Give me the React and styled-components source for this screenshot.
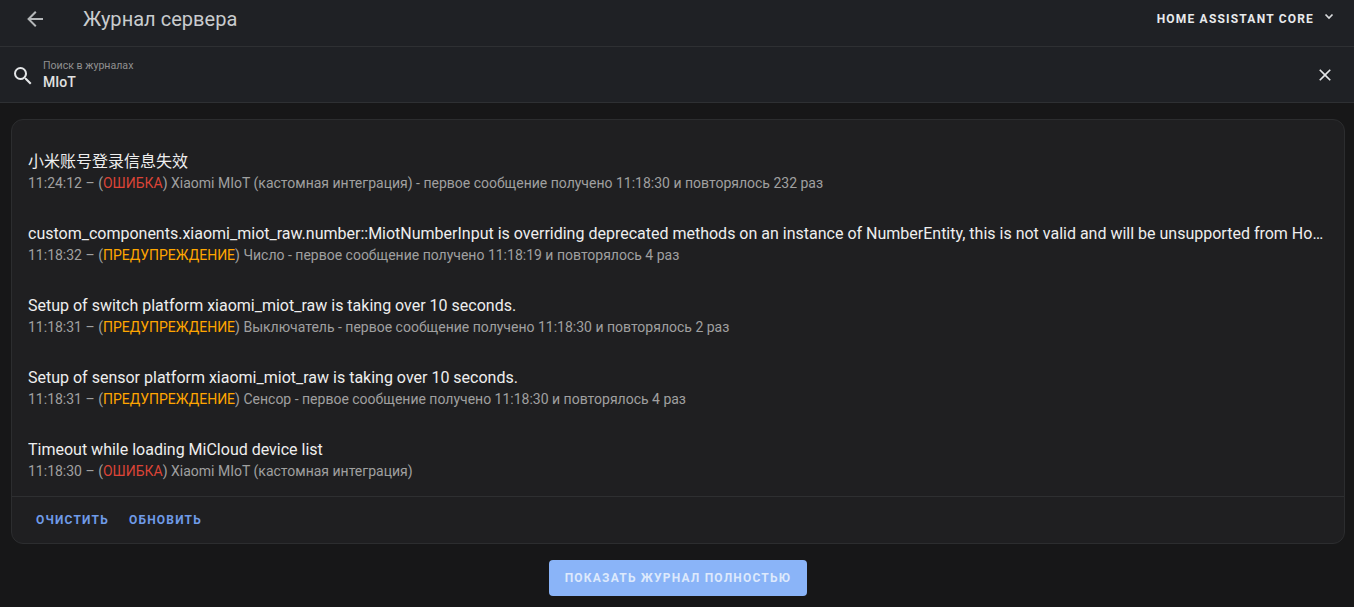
import React from "react";
import styled, { createGlobalStyle } from "styled-components";

const Global = createGlobalStyle`
  html, body { margin: 0; padding: 0; background: #171718; height: 100%; overflow: hidden; }
  body { font-family: Roboto, "Noto Sans CJK SC", sans-serif; }
`;
const Page = styled.div`
  width: 1354px; height: 607px; overflow: hidden; display: flex; flex-direction: column;
  background: #171718;
`;
const TopBar = styled.header`
  height: 47px; box-sizing: border-box; flex: none; display: flex; align-items: flex-start;
  background: #1f2125; border-bottom: 1px solid #2e3033;
`;
const BackIcon = styled.svg`
  width: 24px; height: 24px; margin: 7px 0 0 23px; fill: #b4b7b9; flex: none;
`;
const Title = styled.h1`
  margin: 5px 0 0 36px; font-weight: 400; font-size: 20px; line-height: 29px; color: #c9ccce; flex: 1; letter-spacing: 0.03px;
`;
const Dropdown = styled.div`
  display: flex; align-items: flex-start; margin: 11px 18px 0 0; color: #e8eaec; font-weight: 700; font-size: 12px;
  line-height: 16px; letter-spacing: 1.2px; text-transform: uppercase;
`;
const Chevron = styled.svg`
  width: 14px; height: 14px; margin: -1px 0 0 8px; fill: none; stroke: #d8dadc; stroke-width: 1.7;
`;
const SearchBar = styled.div`
  height: 56px; box-sizing: border-box; flex: none; display: flex; align-items: center;
  background: #1f2125; border-bottom: 1px solid #2e3033;
`;
const SearchIcon = styled.svg`
  width: 24px; height: 24px; margin: 2px 0 0 11px; fill: #e4e6e8; flex: none;
`;
const Field = styled.div`
  flex: 1; margin-left: 8px; display: flex; flex-direction: column; padding-top: 2px;
`;
const FieldLabel = styled.span`
  font-size: 10.6px; line-height: 13px; color: #909090;
`;
const FieldValue = styled.span`
  font-size: 14px; line-height: 20px; font-weight: 500; color: #e1e1e1;
`;
const ClearIcon = styled.svg`
  width: 20px; height: 20px; margin-right: 19px; fill: #e4e6e8; flex: none;
`;
const Content = styled.main`
  flex: 1; display: flex; flex-direction: column; align-items: center; padding: 16px 9px 0 11px;
`;
const Card = styled.section`
  width: 100%; height: 425px; box-sizing: border-box; border: 1px solid #2c2d2f; border-radius: 12px; background: #1f1f21;
  display: flex; flex-direction: column;
`;
const List = styled.ul`
  flex: 1; margin: 0; padding: 16px 0 0; list-style: none; min-height: 0;
`;
const Row = styled.li`
  height: 72px; box-sizing: border-box; padding: 14px 17px 0 16px;
`;
const Message = styled.div`
  font-size: 16px; line-height: 24px; color: #eeeeee; white-space: nowrap; overflow: hidden; text-overflow: ellipsis;
`;
const Meta = styled.div`
  font-size: 14px; line-height: 20px; margin-top: -1px; color: #a0a0a0; white-space: nowrap;
`;
const Level = styled.span`
  color: ${p => (p.$kind === "error" ? "#db4437" : "#ffa600")};
`;
const Footer = styled.div`
  height: 47px; box-sizing: border-box; flex: none; border-top: 1px solid #2e2f31; display: flex; align-items: center; padding-left: 24px; gap: 20px;
`;
const TextButton = styled.button`
  border: 0; background: none; padding: 0; font: 700 12px/16px Roboto, sans-serif; letter-spacing: 1.2px; color: #6f9be8; text-transform: uppercase;
`;
const ShowAll = styled.button`
  margin-top: 16px; width: 258px; height: 36px; border: 0; border-radius: 4px; background: #8ab4f8; color: #dde9fc;
  font: 700 12px/16px Roboto, sans-serif; letter-spacing: 1.2px; text-transform: uppercase; flex: none;
`;

const rows = [
  { msg: "小米账号登录信息失效", time: "11:24:12", kind: "error", rest: "Xiaomi MIoT (кастомная интеграция) - первое сообщение получено 11:18:30 и повторялось 232 раз" },
  { msg: "custom_components.xiaomi_miot_raw.number::MiotNumberInput is overriding deprecated methods on an instance of NumberEntity, this is not valid and will be unsupported from Home Assistant 2022.4. Please report it to the author of the 'xiaomi_miot_raw' custom integration.", time: "11:18:32", kind: "warn", rest: "Число - первое сообщение получено 11:18:19 и повторялось 4 раз" },
  { msg: "Setup of switch platform xiaomi_miot_raw is taking over 10 seconds.", time: "11:18:31", kind: "warn", rest: "Выключатель - первое сообщение получено 11:18:30 и повторялось 2 раз" },
  { msg: "Setup of sensor platform xiaomi_miot_raw is taking over 10 seconds.", time: "11:18:31", kind: "warn", rest: "Сенсор - первое сообщение получено 11:18:30 и повторялось 4 раз" },
  { msg: "Timeout while loading MiCloud device list", time: "11:18:30", kind: "error", rest: "Xiaomi MIoT (кастомная интеграция)" },
];

export default function App() {
  return (
    <Page>
      <Global />
      <TopBar>
        <BackIcon viewBox="0 0 24 24"><path d="M20 11v2H8l5.5 5.5-1.42 1.42L4.16 12l7.92-7.92L13.5 5.5 8 11h12z" /></BackIcon>
        <Title>Журнал сервера</Title>
        <Dropdown>
          Home Assistant Core
          <Chevron viewBox="0 0 14 14"><path d="M3.5 4.5 7 8l3.5-3.5" /></Chevron>
        </Dropdown>
      </TopBar>
      <SearchBar>
        <SearchIcon viewBox="0 0 24 24"><path d="M9.5 3A6.5 6.5 0 0 1 16 9.5c0 1.61-.59 3.09-1.56 4.23l.27.27h.79l5 5-1.5 1.5-5-5v-.79l-.27-.27A6.516 6.516 0 0 1 9.5 16 6.5 6.5 0 0 1 3 9.5 6.5 6.5 0 0 1 9.5 3m0 2C7 5 5 7 5 9.5S7 14 9.5 14 14 12 14 9.5 12 5 9.5 5z" /></SearchIcon>
        <Field>
          <FieldLabel>Поиск в журналах</FieldLabel>
          <FieldValue>MIoT</FieldValue>
        </Field>
        <ClearIcon viewBox="0 0 24 24"><path d="M19 6.41 17.59 5 12 10.59 6.41 5 5 6.41 10.59 12 5 17.59 6.41 19 12 13.41 17.59 19 19 17.59 13.41 12 19 6.41z" /></ClearIcon>
      </SearchBar>
      <Content>
        <Card>
          <List>
            {rows.map((r, i) => (
              <Row key={i}>
                <Message>{r.msg}</Message>
                <Meta>
                  {r.time} – (<Level $kind={r.kind}>{r.kind === "error" ? "ОШИБКА" : "ПРЕДУПРЕЖДЕНИЕ"}</Level>) {r.rest}
                </Meta>
              </Row>
            ))}
          </List>
          <Footer>
            <TextButton>Очистить</TextButton>
            <TextButton>Обновить</TextButton>
          </Footer>
        </Card>
        <ShowAll>Показать журнал полностью</ShowAll>
      </Content>
    </Page>
  );
}
